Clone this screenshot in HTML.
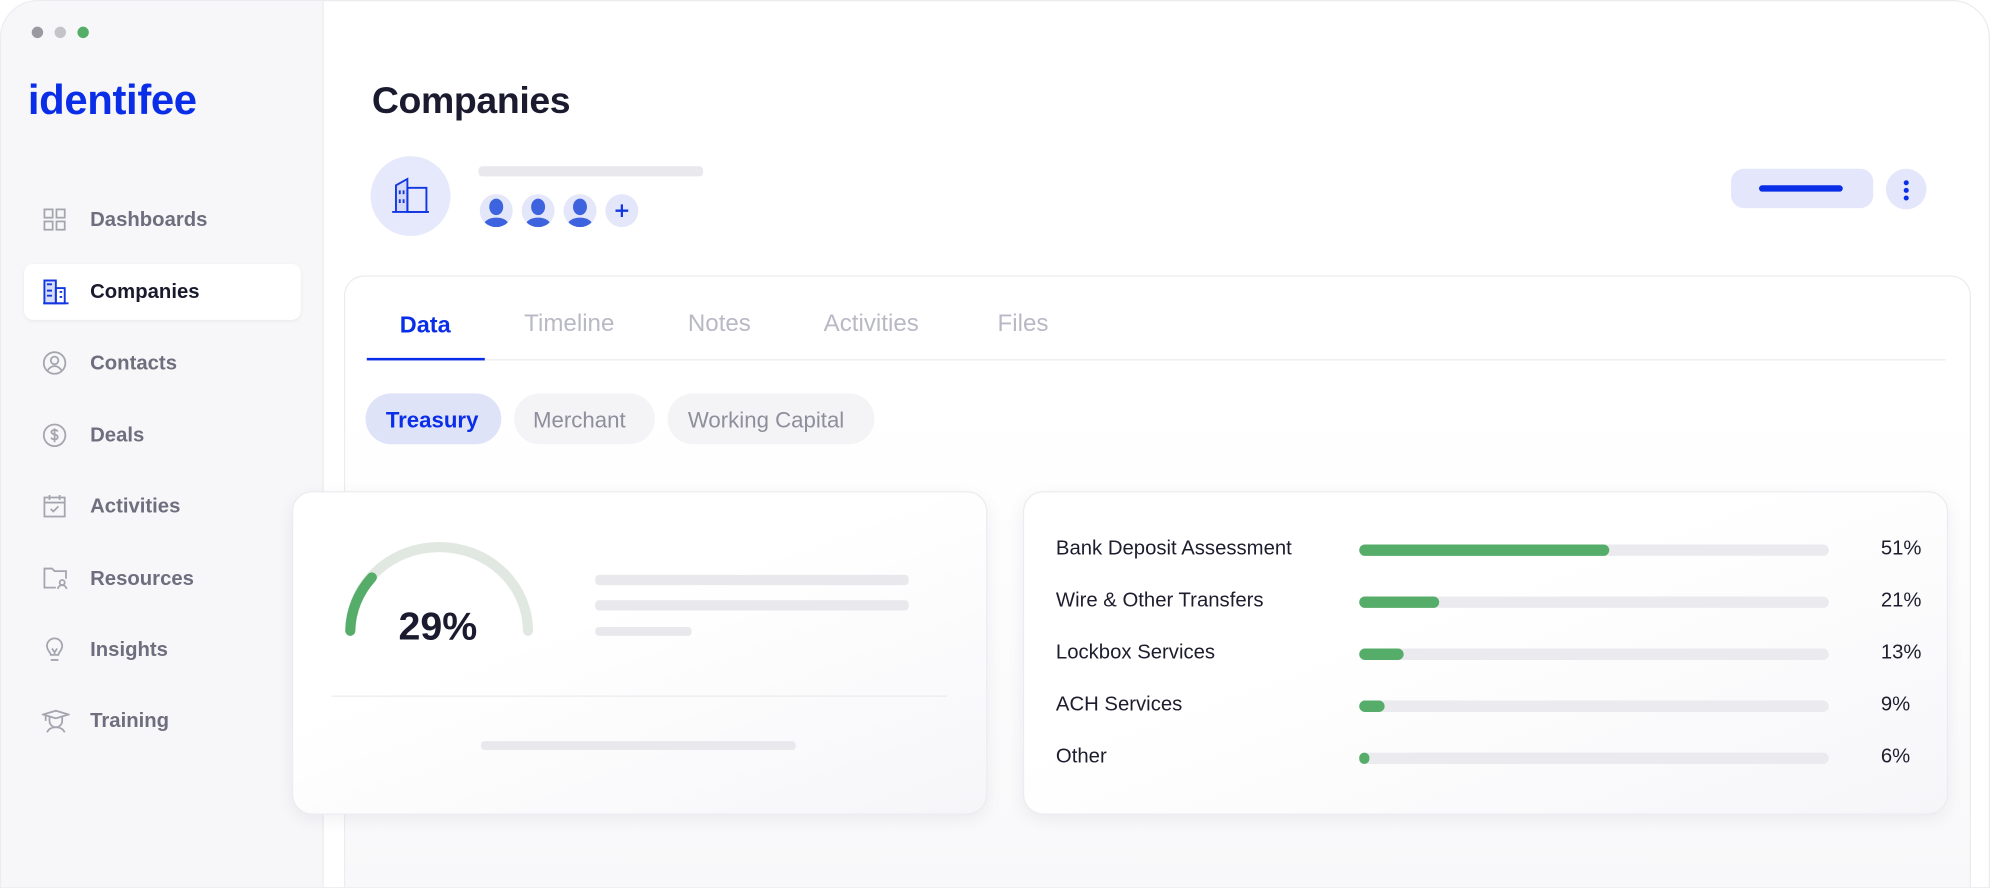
<!DOCTYPE html>
<html><head><meta charset="utf-8"><style>
*{margin:0;padding:0;box-sizing:border-box}
html,body{width:1990px;height:862px;overflow:hidden;background:#fff}
#w{position:absolute;left:0;top:0;width:1568px;height:679px;transform:scale(1.26913);transform-origin:0 0;font-family:"Liberation Sans",sans-serif}
.win{position:absolute;left:0;top:0;width:1568px;height:700px;border-radius:30px 30px 0 0;background:#fff;border:1px solid #ececf0;overflow:hidden}
.side{position:absolute;left:0;top:0;width:254px;height:700px;background:#f7f7f9;border-right:1px solid #ececf0}
.dot{position:absolute;top:20px;width:9px;height:9px;border-radius:50%}
.logo{position:absolute;left:21px;top:59px;font-size:33px;font-weight:bold;color:#0a2ee8;letter-spacing:-0.3px}
.nav{position:absolute;left:18px;width:218px;height:44px;border-radius:7px}
.nav span{position:absolute;left:52px;top:14px;font-size:16px;font-weight:bold;color:#6e6e7e}
.nav svg{position:absolute;left:14px;top:12px}
.act{background:#fff;box-shadow:0 1px 3px rgba(0,0,0,.05)}
.act span{color:#1a1a2e}
.t{position:absolute;white-space:nowrap}
.bar{position:absolute;background:#e8e8ed;border-radius:3px}
.card{position:absolute;background:linear-gradient(160deg,#fff 40%,#f6f6f9);border:1px solid #ececf0;border-radius:16px;box-shadow:0 4px 14px rgba(20,20,50,.06)}
.row .l{position:absolute;left:831px;font-size:16px;color:#1d1d2e}
.track{position:absolute;left:1070px;width:370px;height:9px;border-radius:5px;background:#ebebef}
.fill{position:absolute;left:0;top:0;height:9px;border-radius:5px;background:#56ad69}
.p{position:absolute;left:1481px;font-size:16px;color:#1d1d2e}
.av{position:absolute;top:152px;width:26px;height:26px;border-radius:50%;background:#e4e7fa;overflow:hidden}
</style></head><body><div id="w"><div class="win">
<div class="side">
<div class="dot" style="left:24px;background:#9a98a0"></div>
<div class="dot" style="left:42px;background:#c4c4c8"></div>
<div class="dot" style="left:60px;background:#55ae68"></div>
<div class="logo">identifee</div>

<div class="nav" style="top:150px"><svg width="20" height="20" viewBox="0 0 20 20" fill="none" stroke="#a5a5b0" stroke-width="1.4"><rect x="2" y="2" width="6.5" height="6.5"/><rect x="11.5" y="2" width="6.5" height="6.5"/><rect x="2" y="11.5" width="6.5" height="6.5"/><rect x="11.5" y="11.5" width="6.5" height="6.5"/></svg><span>Dashboards</span></div>
<div class="nav act" style="top:207px"><svg width="22" height="20" viewBox="0 0 22 20" fill="none" stroke="#1237e0" stroke-width="1.5"><rect x="2" y="1" width="9" height="18" fill="#d9def8"/><rect x="11" y="7" width="7" height="12"/><path d="M1 19h20M4 4h4M4 9h4M4 13h4M14 10h2M14 14h2"/></svg><span>Companies</span></div>
<div class="nav" style="top:263px"><svg width="20" height="20" viewBox="0 0 20 20" fill="none" stroke="#a5a5b0" stroke-width="1.4"><circle cx="10" cy="10" r="8.5"/><circle cx="10" cy="8" r="3"/><path d="M4.5 16c1.5-2.5 3.5-3.5 5.5-3.5s4 1 5.5 3.5"/></svg><span>Contacts</span></div>
<div class="nav" style="top:320px"><svg width="20" height="20" viewBox="0 0 20 20" fill="none" stroke="#a5a5b0" stroke-width="1.4"><circle cx="10" cy="10" r="8.5"/><path d="M12.5 7c-.5-1-1.5-1.3-2.5-1.3-1.5 0-2.5.7-2.5 1.8 0 2.5 5 1.2 5 3.8 0 1.2-1 1.9-2.5 1.9-1.2 0-2.2-.4-2.7-1.4M10 4.5v11"/></svg><span>Deals</span></div>
<div class="nav" style="top:376px"><svg width="20" height="20" viewBox="0 0 20 20" fill="none" stroke="#a5a5b0" stroke-width="1.4"><rect x="2" y="3" width="16" height="15"/><path d="M2 7h16M6 1v4M14 1v4M7 12l2 2 4-4"/></svg><span>Activities</span></div>
<div class="nav" style="top:433px"><svg width="22" height="20" viewBox="0 0 22 20" fill="none" stroke="#a5a5b0" stroke-width="1.4"><path d="M11 17H2V2h6l2 2h9v6"/><circle cx="16" cy="13" r="2"/><path d="M12.5 18c.5-2 2-3 3.5-3s3 1 3.5 3"/></svg><span>Resources</span></div>
<div class="nav" style="top:489px"><svg width="20" height="20" viewBox="0 0 20 20" fill="none" stroke="#a5a5b0" stroke-width="1.4"><path d="M7 14c0-2-3-3.5-3-7a6 6 0 0 1 12 0c0 3.5-3 5-3 7z"/><path d="M7 18h6M8 9l2 3 2-3M10 12v2"/></svg><span>Insights</span></div>
<div class="nav" style="top:545px"><svg width="22" height="20" viewBox="0 0 22 20" fill="none" stroke="#a5a5b0" stroke-width="1.4"><path d="M1 5l10-3 10 3-10 3z"/><path d="M3 6v4M6 7v3a5 5 0 0 0 10 0V7"/><path d="M4 19c1.5-3 4-4 7-4s5.5 1 7 4"/></svg><span>Training</span></div>
</div>

<div class="t" style="left:292px;top:62px;font-size:29.5px;font-weight:bold;color:#1b1b2f;letter-spacing:-0.3px">Companies</div>
<div style="position:absolute;left:291px;top:122px;width:63px;height:63px;border-radius:50%;background:#e6e9fb"></div>
<svg style="position:absolute;left:305px;top:136px" width="36" height="34" viewBox="0 0 36 34" fill="none" stroke="#1237e0" stroke-width="1.5"><path d="M6 30V9l9-5v26" fill="#d3d9f7"/><rect x="15" y="11" width="15" height="19"/><path d="M3 30h29M9 13v3M12 13v3M9 20v3M12 20v3"/></svg>
<div class="bar" style="left:376px;top:130px;width:177px;height:8px"></div>
<div class="av" style="left:377px"><svg width="26" height="26" viewBox="0 0 26 26"><ellipse cx="13" cy="10" rx="5.5" ry="6.5" fill="#3d63de"/><path d="M2 27c1-6 5-8.5 11-8.5s10 2.5 11 8.5z" fill="#3d63de"/></svg></div>
<div class="av" style="left:410px"><svg width="26" height="26" viewBox="0 0 26 26"><ellipse cx="13" cy="10" rx="5.5" ry="6.5" fill="#3d63de"/><path d="M2 27c1-6 5-8.5 11-8.5s10 2.5 11 8.5z" fill="#3d63de"/></svg></div>
<div class="av" style="left:443px"><svg width="26" height="26" viewBox="0 0 26 26"><ellipse cx="13" cy="10" rx="5.5" ry="6.5" fill="#3d63de"/><path d="M2 27c1-6 5-8.5 11-8.5s10 2.5 11 8.5z" fill="#3d63de"/></svg></div>
<div class="av" style="left:476px"><svg width="26" height="26" viewBox="0 0 26 26"><path d="M13 8v10M8 13h10" stroke="#1237e0" stroke-width="1.8"/></svg></div>

<div style="position:absolute;left:1363px;top:132px;width:112px;height:31px;border-radius:10px;background:#e4e7fb"></div>
<div style="position:absolute;left:1385px;top:145px;width:66px;height:5px;border-radius:3px;background:#0a2ee8"></div>
<div style="position:absolute;left:1485px;top:132px;width:32px;height:32px;border-radius:50%;background:#e4e7fb"></div>
<div style="position:absolute;left:1499px;top:141px;width:4px;height:4px;border-radius:50%;background:#0a2ee8;box-shadow:0 6px 0 #0a2ee8,0 12px 0 #0a2ee8"></div>

<div style="position:absolute;left:270px;top:216px;width:1282px;height:500px;border:1px solid #ececf0;border-radius:16px;background:linear-gradient(180deg,#fff 20%,#f8f8fa)"></div>
<div class="t" style="left:314px;top:244px;font-size:18.5px;color:#0a2ee8;font-weight:bold">Data</div>
<div class="t" style="left:412px;top:244px;font-size:19px;color:#b9b9c5">Timeline</div>
<div class="t" style="left:541px;top:244px;font-size:19px;color:#b9b9c5">Notes</div>
<div class="t" style="left:648px;top:244px;font-size:19px;color:#b9b9c5">Activities</div>
<div class="t" style="left:785px;top:244px;font-size:19px;color:#b9b9c5">Files</div>
<div style="position:absolute;left:288px;top:282px;width:1244px;height:1px;background:#ececf0"></div>
<div style="position:absolute;left:288px;top:281px;width:93px;height:2px;background:#0a2ee8"></div>

<div style="position:absolute;left:287px;top:309px;width:107px;height:40px;border-radius:20px;background:#dfe3f8"></div>
<div class="t" style="left:303px;top:320px;font-size:17.5px;color:#0a2ee8;font-weight:bold">Treasury</div>
<div style="position:absolute;left:404px;top:309px;width:111px;height:40px;border-radius:20px;background:#f4f4f7"></div>
<div class="t" style="left:419px;top:320px;font-size:17.5px;color:#8e8e9c">Merchant</div>
<div style="position:absolute;left:525px;top:309px;width:163px;height:40px;border-radius:20px;background:#f4f4f7"></div>
<div class="t" style="left:541px;top:320px;font-size:17.5px;color:#8e8e9c">Working Capital</div>

<div class="card" style="left:229px;top:386px;width:548px;height:255px"></div>
<svg style="position:absolute;left:260px;top:415px" width="170" height="100" viewBox="260 415 170 100" fill="none" stroke-linecap="round" stroke-width="8"><path d="M275 496A70 66 0 0 1 415 496" stroke="#e0e8e1"/><path d="M275 496A70 66 0 0 1 292 454" stroke="#56ad69"/></svg>
<div class="t" style="left:313px;top:475px;font-size:31px;font-weight:bold;color:#1b1b2f">29%</div>
<div class="bar" style="left:468px;top:452px;width:247px;height:8px"></div>
<div class="bar" style="left:468px;top:472px;width:247px;height:8px"></div>
<div class="bar" style="left:468px;top:493px;width:76px;height:7px"></div>
<div style="position:absolute;left:260px;top:547px;width:485px;height:1px;background:#ececf0"></div>
<div class="bar" style="left:378px;top:583px;width:248px;height:7px"></div>

<div class="card" style="left:805px;top:386px;width:729px;height:255px"></div>
<div class="row"><div class="t l" style="top:423px">Bank Deposit Assessment</div><div class="track" style="top:428px"><div class="fill" style="width:197px"></div></div><div class="t p" style="top:423px">51%</div></div>
<div class="row"><div class="t l" style="top:464px">Wire &amp; Other Transfers</div><div class="track" style="top:469px"><div class="fill" style="width:63px"></div></div><div class="t p" style="top:464px">21%</div></div>
<div class="row"><div class="t l" style="top:505px">Lockbox Services</div><div class="track" style="top:510px"><div class="fill" style="width:35px"></div></div><div class="t p" style="top:505px">13%</div></div>
<div class="row"><div class="t l" style="top:546px">ACH Services</div><div class="track" style="top:551px"><div class="fill" style="width:20px"></div></div><div class="t p" style="top:546px">9%</div></div>
<div class="row"><div class="t l" style="top:587px">Other</div><div class="track" style="top:592px"><div class="fill" style="width:8px"></div></div><div class="t p" style="top:587px">6%</div></div>
</div></div></body></html>
